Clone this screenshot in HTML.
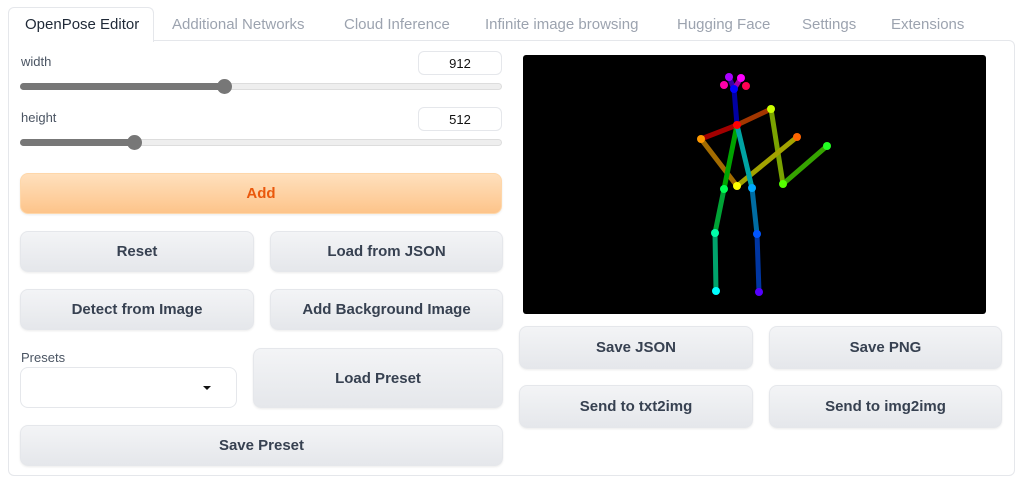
<!DOCTYPE html>
<html><head><style>
body{margin:0;width:1024px;height:483px;background:#fff;font-family:"Liberation Sans",sans-serif;position:relative;overflow:hidden;color:#374151}
.a{position:absolute}
.tab{position:absolute;top:16px;font-size:15px;color:#9ca3af}
.btn{position:absolute;background:linear-gradient(#f3f4f6,#e5e7eb);border:1px solid #e5e7eb;border-radius:8px;font-weight:bold;font-size:15px;color:#374151;display:flex;align-items:center;justify-content:center;box-sizing:border-box;box-shadow:0 1px 2px rgba(0,0,0,.08)}
.lbl{position:absolute;font-size:13px;color:#4b5563}
.num{position:absolute;width:84px;height:24px;border:1px solid #e5e7eb;border-radius:6px;font-size:13px;text-align:center;line-height:24px;color:#111;box-sizing:border-box}
.track{position:absolute;height:7px;border-radius:4px;background:#eee;border:1px solid #ddd;box-sizing:border-box}
.fill{position:absolute;height:7px;border-radius:4px;background:#777}
.knob{position:absolute;width:15px;height:15px;border-radius:50%;background:#777}
</style></head><body>
<div class="a" style="left:8px;top:40px;width:1007px;height:436px;border:1px solid #e5e7eb;border-radius:0 6px 6px 6px;box-sizing:border-box"></div>
<div class="a" style="left:8px;top:7px;width:146px;height:35px;border:1px solid #e5e7eb;border-bottom:none;border-radius:6px 6px 0 0;background:#fff;box-sizing:border-box"></div>
<div class="tab" style="left:25px;color:#1f2937">OpenPose Editor</div>
<div class="tab" style="left:172px">Additional Networks</div>
<div class="tab" style="left:344px">Cloud Inference</div>
<div class="tab" style="left:485px">Infinite image browsing</div>
<div class="tab" style="left:677px">Hugging Face</div>
<div class="tab" style="left:802px">Settings</div>
<div class="tab" style="left:891px">Extensions</div>

<div class="lbl" style="left:21px;top:54px">width</div>
<div class="num" style="left:418px;top:51px">912</div>
<div class="track" style="left:20px;top:83px;width:482px"></div>
<div class="fill" style="left:20px;top:83px;width:205px"></div>
<div class="knob" style="left:217px;top:79px"></div>
<div class="lbl" style="left:21px;top:110px">height</div>
<div class="num" style="left:418px;top:107px">512</div>
<div class="track" style="left:20px;top:139px;width:482px"></div>
<div class="fill" style="left:20px;top:139px;width:115px"></div>
<div class="knob" style="left:127px;top:135px"></div>

<div class="btn" style="left:20px;top:173px;width:482px;height:41px;background:linear-gradient(#ffe0bd,#fdc48a);border-color:#fed7aa;color:#ea580c">Add</div>
<div class="btn" style="left:20px;top:231px;width:234px;height:41px">Reset</div>
<div class="btn" style="left:270px;top:231px;width:233px;height:41px">Load from JSON</div>
<div class="btn" style="left:20px;top:289px;width:234px;height:41px">Detect from Image</div>
<div class="btn" style="left:270px;top:289px;width:233px;height:41px">Add Background Image</div>
<div class="lbl" style="left:21px;top:350px">Presets</div>
<div class="a" style="left:20px;top:367px;width:217px;height:41px;border:1px solid #e5e7eb;border-radius:8px;box-sizing:border-box"></div>
<div class="a" style="left:203px;top:386px;width:0;height:0;border-left:4px solid transparent;border-right:4px solid transparent;border-top:4px solid #111"></div>
<div class="btn" style="left:253px;top:348px;width:250px;height:60px">Load Preset</div>
<div class="btn" style="left:20px;top:425px;width:483px;height:41px">Save Preset</div>

<div class="a" style="left:523px;top:55px;width:463px;height:259px;background:#000;border-radius:3px"></div>
<svg class="a" style="left:0;top:0" width="1024" height="483">
<g stroke-width="5" stroke-linecap="round" opacity="0.8">
<line x1="737" y1="125" x2="701" y2="139" stroke="#c00"/>
<line x1="701" y1="139" x2="737" y2="186" stroke="#c80"/>
<line x1="737" y1="125" x2="771" y2="109" stroke="#c40"/>
<line x1="771" y1="109" x2="783" y2="184" stroke="#9c0"/>
<line x1="783" y1="184" x2="827" y2="146" stroke="#4c0"/>
<line x1="737" y1="186" x2="797" y2="137" stroke="#cc0"/>
<line x1="737" y1="125" x2="724" y2="189" stroke="#0c0"/>
<line x1="724" y1="189" x2="715" y2="233" stroke="#0c4"/>
<line x1="715" y1="233" x2="716" y2="291" stroke="#0c8"/>
<line x1="737" y1="125" x2="752" y2="188" stroke="#0cc"/>
<line x1="752" y1="188" x2="757" y2="234" stroke="#08c"/>
<line x1="757" y1="234" x2="759" y2="292" stroke="#04c"/>
<line x1="737" y1="125" x2="734" y2="89" stroke="#00c"/>
<line x1="734" y1="89" x2="729" y2="77" stroke="#40c"/>
<line x1="734" y1="89" x2="741" y2="78" stroke="#c0c"/>
</g>
<g>
<circle cx="737" cy="125" r="4" fill="#f00"/><circle cx="701" cy="139" r="4" fill="#f90"/>
<circle cx="737" cy="186" r="4" fill="#ff0"/><circle cx="771" cy="109" r="4" fill="#cf0"/>
<circle cx="783" cy="184" r="4" fill="#5f0"/><circle cx="827" cy="146" r="4" fill="#2f2"/>
<circle cx="797" cy="137" r="4" fill="#f60"/><circle cx="724" cy="189" r="4" fill="#0f5"/>
<circle cx="715" cy="233" r="4" fill="#0fa"/><circle cx="716" cy="291" r="4" fill="#0ff"/>
<circle cx="752" cy="188" r="4" fill="#0af"/><circle cx="757" cy="234" r="4" fill="#05f"/>
<circle cx="759" cy="292" r="4" fill="#50f"/><circle cx="734" cy="89" r="4" fill="#00f"/>
<circle cx="729" cy="77" r="4" fill="#a0f"/><circle cx="741" cy="78" r="4" fill="#f0f"/>
<circle cx="724" cy="85" r="4" fill="#f0a"/><circle cx="746" cy="86" r="4" fill="#f05"/>
</g>
</svg>

<div class="btn" style="left:519px;top:326px;width:234px;height:43px">Save JSON</div>
<div class="btn" style="left:769px;top:326px;width:233px;height:43px">Save PNG</div>
<div class="btn" style="left:519px;top:385px;width:234px;height:43px">Send to txt2img</div>
<div class="btn" style="left:769px;top:385px;width:233px;height:43px">Send to img2img</div>
</body></html>
